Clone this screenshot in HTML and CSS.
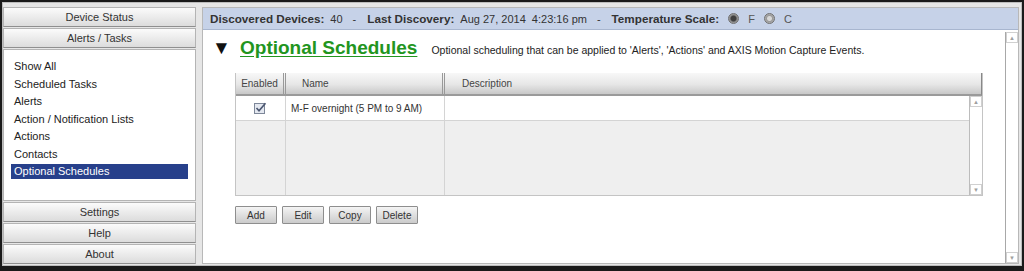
FILE: index.html
```html
<!DOCTYPE html>
<html>
<head>
<meta charset="utf-8">
<link rel="stylesheet" href="styles.css">
</head>
<body>
<div class="frame">
  <aside class="sidebar">
    <div class="navbtn">Device Status</div>
    <div class="navbtn">Alerts / Tasks</div>
    <ul class="navlist">
      <li>Show All</li>
      <li>Scheduled Tasks</li>
      <li>Alerts</li>
      <li>Action / Notification Lists</li>
      <li>Actions</li>
      <li>Contacts</li>
      <li class="sel">Optional Schedules</li>
    </ul>
    <div class="navbtn">Settings</div>
    <div class="navbtn">Help</div>
    <div class="navbtn">About</div>
  </aside>
  <main class="main">
    <div class="status">
      <b>Discovered Devices:</b><span class="v">40</span><span class="dash">-</span>
      <b>Last Discovery:</b><span class="v">Aug 27, 2014&nbsp;&nbsp;4:23:16 pm</span><span class="dash">-</span>
      <b>Temperature Scale:</b>
      <span class="radio on"></span><span class="rl">F</span>
      <span class="radio"></span><span class="rl">C</span>
    </div>
    <div class="body">
      <div class="content">
        <div class="titlerow">
          <span class="tri">▼</span>
          <span class="title">Optional Schedules</span>
          <span class="desc">Optional scheduling that can be applied to 'Alerts', 'Actions' and AXIS Motion Capture Events.</span>
        </div>
        <div class="grid">
          <div class="ghead">
            <div class="c1">Enabled</div>
            <div class="c2">Name</div>
            <div class="c3">Description</div>
          </div>
          <div class="gbody">
            <div class="rows">
              <div class="row">
                <div class="c1"><svg width="13" height="12" viewBox="0 0 13 12"><rect x="0.5" y="1.5" width="10" height="10" fill="#e4e8f0" stroke="#7d8799"/><path d="M2.5 6 L5 8.8 L11.5 1.2" fill="none" stroke="#4a5670" stroke-width="1.6"/></svg></div>
                <div class="c2">M-F overnight (5 PM to 9 AM)</div>
                <div class="c3"></div>
              </div>
              <div class="row empty">
                <div class="c1"></div>
                <div class="c2"></div>
                <div class="c3"></div>
              </div>
            </div>
            <div class="vscroll"><span class="arr">▲</span><span class="arr">▼</span></div>
          </div>
        </div>
        <div class="buttons">
          <button class="btn">Add</button>
          <button class="btn">Edit</button>
          <button class="btn">Copy</button>
          <button class="btn">Delete</button>
        </div>
      </div>
      <div class="vscroll outer"><span class="arr">▲</span><span class="arr">▼</span></div>
    </div>
  </main>
</div>
</body>
</html>
```
FILE: styles.css
```css
* { box-sizing: border-box; }
html, body { margin: 0; padding: 0; }
body {
  width: 1024px; height: 271px; overflow: hidden;
  font-family: "Liberation Sans", Arial, sans-serif;
  color: #222;
  background: #1a1a1a;
}
.frame {
  margin: 2px 2px 3px 2px;
  height: 264px;
  background: #e6e6e6;
  display: flex;
  gap: 6px;
  padding: 4px 2px 1px 0;
  border: 1px solid #bdbdbd;
}
.sidebar {
  width: 193px;
  display: flex; flex-direction: column; gap: 1px;
}
.navbtn {
  height: 20px;
  background: linear-gradient(#fbfbfb, #dcdcdc);
  border: 1px solid #b4b4b4;
  border-bottom-color: #8f8f8f;
  font-size: 11px; color: #333;
  display: flex; align-items: center; justify-content: center;
}
.navlist {
  list-style: none; margin: 0;
  flex: 1;
  background: #fff;
  border: 1px solid #b4b4b4;
  padding: 8px 7px 0 7px;
  font-size: 11px; color: #222;
}
.navlist li { height: 17.5px; line-height: 17px; padding-left: 3px; }
.navlist li.sel { background: #27408b; color: #fff; height: 15px; line-height: 15px; margin-top: 1px; }
.main {
  flex: 1;
  display: flex; flex-direction: column;
  border: 1px solid #b8b8b8;
  background: #fff;
}
.status {
  height: 22px;
  background: #c6d2e8;
  border-bottom: 1px solid #a8b6cf;
  display: flex; align-items: center;
  padding-left: 7px;
  font-size: 11.7px; color: #333;
}
.status b { font-weight: bold; color: #333; }
.status .v { margin-left: 6px; font-size: 11px; }
.status .dash { margin: 0 11px 0 10px; font-size: 11px; }
.radio {
  width: 11px; height: 11px; border-radius: 50%;
  border: 1px solid #707070;
  background: radial-gradient(circle, #d8d8d8 0 2px, #9a9a9a 3px, #c8c8c8);
  margin-left: 9px;
}
.radio.on { background: radial-gradient(circle, #404040 0 2.5px, #888 3.5px, #c0c0c0); }
.rl { margin-left: 9px; color: #555; font-size: 11px; }
.body { flex: 1; display: flex; }
.content { flex: 1; padding: 6px 0 0 12px; }
.titlerow { display: flex; align-items: center; height: 24px; }
.tri { font-size: 19px; color: #111; width: 16px; margin-left: -3px; margin-top: -1px; }
.title {
  margin-left: 12px;
  font-size: 19px; font-weight: bold;
  color: #22951e; text-decoration: underline; text-underline-offset: 2px;
}
.desc { margin-left: 14px; font-size: 10.5px; color: #222; margin-top: 4px; }
.grid {
  margin: 13px 0 0 20px;
  width: 748px;
  border: 1px solid #c4c4c4;
  border-top: none;
}
.ghead {
  display: flex; height: 23px;
  background: linear-gradient(#f8f8f8, #e6e6e6 55%, #c8c8c8);
  border-bottom: 2px solid #9a9a9a;
  border-right: 1px solid #888;
  font-size: 10px; color: #444;
}
.ghead > div { display: flex; align-items: center; border-right: 3px double #999; }
.ghead .c1 { width: 50px; justify-content: center; }
.ghead .c2 { width: 159px; padding-left: 16px; }
.ghead .c3 { flex: 1; padding-left: 17px; border-right: none; }
.gbody { display: flex; height: 99px; }
.rows { flex: 1; display: flex; flex-direction: column; }
.row { display: flex; height: 25px; background: #fff; border-bottom: 1px solid #d4d4d4; font-size: 10px; color: #333; }
.row.empty { flex: 1; background: #efefef; border-bottom: none; }
.row > div { border-right: 1px solid #d4d4d4; display: flex; align-items: center; }
.row .c1 { width: 50px; justify-content: center; }
.row .c2 { width: 159px; padding-left: 5px; }
.row .c3 { flex: 1; border-right: none; }
.vscroll {
  width: 13px;
  background: #fff;
  border-left: 1px solid #bcbcbc;
  display: flex; flex-direction: column; justify-content: space-between;
  font-size: 6px; color: #a0a0a0;
}
.vscroll .arr { height: 11px; display: flex; align-items: center; justify-content: center; border: 1px solid #d0d0d0; }
.vscroll.outer { width: 13px; margin-top: 2px; border-left: 1px solid #a8a8a8; }
.buttons { display: flex; gap: 5px; margin: 10px 0 0 20px; }
.btn {
  width: 42px; height: 18px; padding: 0;
  font-family: "Liberation Sans", Arial, sans-serif;
  font-size: 10px; color: #333;
  background: linear-gradient(#f4f4f4, #cbcbcb);
  border: 1px solid #8e8e8e;
  border-radius: 1px;
}
```
